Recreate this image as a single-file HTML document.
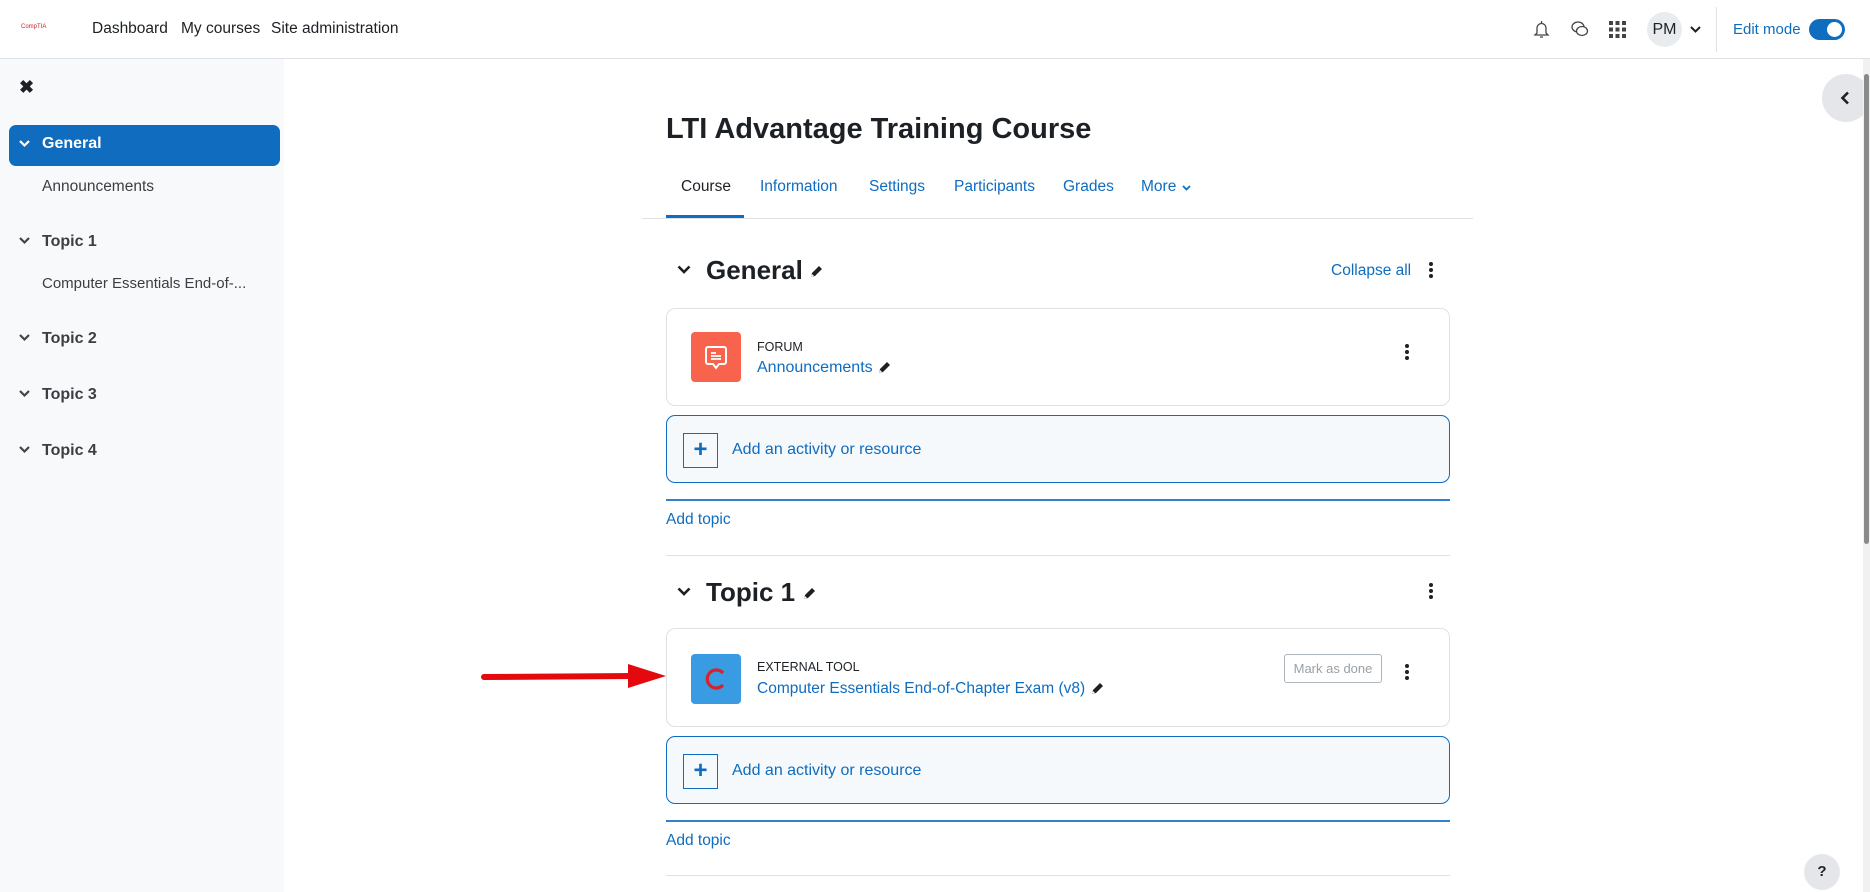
<!DOCTYPE html>
<html><head><meta charset="utf-8"><style>
*{box-sizing:border-box;margin:0;padding:0}
body{width:1870px;height:892px;overflow:hidden;background:#fff;font-family:"Liberation Sans",sans-serif;color:#1d2125;position:relative;font-size:17px}
.a{position:absolute;white-space:nowrap}
.lk{color:#0f6cbf}
.hdr{position:absolute;left:0;top:0;width:1870px;height:59px;background:#fff;border-bottom:1px solid #dee2e6}
.side{position:absolute;left:0;top:59px;width:284px;height:833px;background:#f8f9fa}
.card{position:absolute;left:666px;width:784px;border:1px solid #dee2e6;border-radius:9px;background:#fff}
.add{position:absolute;left:666px;width:784px;border:1px solid #0f6cbf;border-radius:9px;background:#f5f9fc}
.plus{position:absolute;left:16px;width:35px;height:35px;border:1px solid #0f6cbf;color:#0f6cbf;font-weight:bold;font-size:24px;text-align:center;line-height:31px}
.dots{position:absolute;width:4px}
.dots i{display:block;width:4px;height:4px;background:#1d2125;border-radius:50%;margin-bottom:2px}
.tv{font-weight:bold;font-size:16px}
.pen{display:inline-block;vertical-align:middle}
</style></head><body>
<div class="hdr">
 <div class="a" style="left:21px;top:24px;font-size:6px;color:#c8202f">CompTIA</div>
 <div class="a" style="left:92px;top:20px;font-size:15.5px">Dashboard</div>
 <div class="a" style="left:181px;top:20px;font-size:15.5px">My courses</div>
 <div class="a" style="left:271px;top:20px;font-size:15.5px">Site administration</div>
 <svg class="a" style="left:1533px;top:19px" width="17" height="20" viewBox="0 0 17 20"><path d="M8.5 2v2M4 14V9a4.5 4.5 0 0 1 9 0v5l2 2H2z M7 18h3" fill="none" stroke="#444" stroke-width="1.3"/></svg>
 <svg class="a" style="left:1570px;top:19px" width="20" height="20" viewBox="0 0 20 20"><ellipse cx="8" cy="8" rx="6" ry="5" fill="none" stroke="#444" stroke-width="1.3"/><ellipse cx="12" cy="12" rx="5.5" ry="4.5" fill="#fff" stroke="#444" stroke-width="1.3"/></svg>
 <svg class="a" style="left:1609px;top:21px" width="17" height="17" viewBox="0 0 17 17" fill="#444"><rect x="0" y="0" width="4" height="4"/><rect x="6.5" y="0" width="4" height="4"/><rect x="13" y="0" width="4" height="4"/><rect x="0" y="6.5" width="4" height="4"/><rect x="6.5" y="6.5" width="4" height="4"/><rect x="13" y="6.5" width="4" height="4"/><rect x="0" y="13" width="4" height="4"/><rect x="6.5" y="13" width="4" height="4"/><rect x="13" y="13" width="4" height="4"/></svg>
 <div class="a" style="left:1647px;top:12px;width:35px;height:35px;border-radius:50%;background:#e9ecef;text-align:center;line-height:35px;font-size:16px">PM</div>
 <svg class="a" style="left:1690px;top:26px" width="11" height="8" viewBox="0 0 11 8"><path d="M1 1l4.5 4.5L10 1" fill="none" stroke="#1d2125" stroke-width="2"/></svg>
 <div class="a" style="left:1716px;top:7px;width:1px;height:45px;background:#dee2e6"></div>
 <div class="a lk" style="left:1733px;top:21px;font-size:15px">Edit mode</div>
 <div class="a" style="left:1809px;top:19px;width:36px;height:21px;border-radius:11px;background:#0f6cbf"><div style="position:absolute;right:3px;top:3px;width:15px;height:15px;border-radius:50%;background:#fff"></div></div>
</div>
<div class="side">
 <div class="a" style="left:19px;top:18px;font-size:18px;font-weight:bold">✖</div>
 <div class="a" style="left:9px;top:66px;width:271px;height:41px;border-radius:7px;background:#0f6cbf"></div>
 <svg class="a" style="left:19px;top:81px" width="11" height="8" viewBox="0 0 11 8"><path d="M1 1l4.5 4.5L10 1" fill="none" stroke="#fff" stroke-width="2.2"/></svg>
 <div class="a tv" style="left:42px;top:76px;color:#fff">General</div>
 <div class="a" style="left:42px;top:119px;font-size:15.5px;color:#3a3f44">Announcements</div>
 <svg class="a" style="left:19px;top:178px" width="11" height="8" viewBox="0 0 11 8"><path d="M1 1l4.5 4.5L10 1" fill="none" stroke="#444" stroke-width="2.2"/></svg>
 <div class="a tv" style="left:42px;top:174px;color:#3a3f44">Topic 1</div>
 <div class="a" style="left:42px;top:216px;font-size:15px;color:#3a3f44">Computer Essentials End-of-...</div>
 <svg class="a" style="left:19px;top:275px" width="11" height="8" viewBox="0 0 11 8"><path d="M1 1l4.5 4.5L10 1" fill="none" stroke="#444" stroke-width="2.2"/></svg>
 <div class="a tv" style="left:42px;top:271px;color:#3a3f44">Topic 2</div>
 <svg class="a" style="left:19px;top:331px" width="11" height="8" viewBox="0 0 11 8"><path d="M1 1l4.5 4.5L10 1" fill="none" stroke="#444" stroke-width="2.2"/></svg>
 <div class="a tv" style="left:42px;top:327px;color:#3a3f44">Topic 3</div>
 <svg class="a" style="left:19px;top:387px" width="11" height="8" viewBox="0 0 11 8"><path d="M1 1l4.5 4.5L10 1" fill="none" stroke="#444" stroke-width="2.2"/></svg>
 <div class="a tv" style="left:42px;top:383px;color:#3a3f44">Topic 4</div>
</div>

<div class="a" style="left:666px;top:113px;font-size:29px;font-weight:bold">LTI Advantage Training Course</div>
<div class="a" style="left:681px;top:178px;font-size:15.5px">Course</div>
<div class="a lk" style="left:760px;top:178px;font-size:15.5px">Information</div>
<div class="a lk" style="left:869px;top:178px;font-size:15.5px">Settings</div>
<div class="a lk" style="left:954px;top:178px;font-size:15.5px">Participants</div>
<div class="a lk" style="left:1063px;top:178px;font-size:15.5px">Grades</div>
<div class="a lk" style="left:1141px;top:178px;font-size:15.5px">More</div>
<svg class="a" style="left:1182px;top:185px" width="9" height="6" viewBox="0 0 9 6"><path d="M1 1l3.5 3.5L8 1" fill="none" stroke="#0f6cbf" stroke-width="1.8"/></svg>
<div class="a" style="left:642px;top:218px;width:831px;height:1px;background:#dee2e6"></div>
<div class="a" style="left:666px;top:215px;width:78px;height:3px;background:#0f6cbf"></div>

<svg class="a" style="left:677px;top:265px" width="14" height="10" viewBox="0 0 14 10"><path d="M1.5 1.5l5.5 5.5 5.5-5.5" fill="none" stroke="#1d2125" stroke-width="2.6"/></svg>
<div class="a" style="left:706px;top:255px;font-size:26px;font-weight:bold">General</div>
<svg class="a" style="left:809px;top:265px" width="14" height="14" viewBox="0 0 14 14"><path d="M2 12l1-4 7-7 3 3-7 7z" fill="#1d2125"/><path d="M2 12l1-3 2 2z" fill="#fff"/></svg>
<div class="a lk" style="left:1331px;top:262px;font-size:15.5px">Collapse all</div>
<div class="dots" style="left:1429px;top:262px"><i></i><i></i><i></i></div>

<div class="card" style="top:308px;height:98px">
 <div class="a" style="left:24px;top:23px;width:50px;height:50px;border-radius:4px;background:#f7634d"></div>
 <svg class="a" style="left:38px;top:36px" width="22" height="26" viewBox="0 0 22 26"><path d="M3 2h16a2 2 0 0 1 2 2v13a2 2 0 0 1-2 2h-5l-3 4-3-4H3a2 2 0 0 1-2-2V4a2 2 0 0 1 2-2z" fill="none" stroke="#fff" stroke-width="2"/><path d="M6 8h5M6 11h10M6 14h10" stroke="#fff" stroke-width="1.8"/></svg>
 <div class="a" style="left:90px;top:31px;font-size:12.5px">FORUM</div>
 <div class="a lk" style="left:90px;top:50px;font-size:16px">Announcements <svg class="pen" width="14" height="14" viewBox="0 0 14 14"><path d="M2 12l1-4 7-7 3 3-7 7z" fill="#1d2125"/><path d="M2 12l1-3 2 2z" fill="#fff"/></svg></div>
 <div class="dots" style="left:738px;top:35px"><i></i><i></i><i></i></div>
</div>
<div class="add" style="top:415px;height:68px">
 <div class="plus" style="top:17px">+</div>
 <div class="a lk" style="left:65px;top:25px;font-size:16px">Add an activity or resource</div>
</div>
<div class="a" style="left:666px;top:499px;width:784px;height:2px;background:#0f6cbf;opacity:.85"></div>
<div class="a lk" style="left:666px;top:511px;font-size:15.5px">Add topic</div>
<div class="a" style="left:666px;top:555px;width:784px;height:1px;background:#dee2e6"></div>

<svg class="a" style="left:677px;top:587px" width="14" height="10" viewBox="0 0 14 10"><path d="M1.5 1.5l5.5 5.5 5.5-5.5" fill="none" stroke="#1d2125" stroke-width="2.6"/></svg>
<div class="a" style="left:706px;top:577px;font-size:26px;font-weight:bold">Topic 1</div>
<svg class="a" style="left:802px;top:587px" width="14" height="14" viewBox="0 0 14 14"><path d="M2 12l1-4 7-7 3 3-7 7z" fill="#1d2125"/><path d="M2 12l1-3 2 2z" fill="#fff"/></svg>
<div class="dots" style="left:1429px;top:583px"><i></i><i></i><i></i></div>

<div class="card" style="top:628px;height:99px">
 <div class="a" style="left:24px;top:25px;width:50px;height:50px;border-radius:4px;background:#399be2"></div>
 <svg class="a" style="left:36px;top:37px" width="26" height="26" viewBox="0 0 26 26"><path d="M20 7A9 9 0 1 0 20 19" fill="none" stroke="#d9202b" stroke-width="3.2"/></svg>
 <div class="a" style="left:90px;top:31px;font-size:12.5px">EXTERNAL TOOL</div>
 <div class="a lk" style="left:90px;top:51px;font-size:15.5px">Computer Essentials End-of-Chapter Exam (v8) <svg class="pen" width="14" height="14" viewBox="0 0 14 14"><path d="M2 12l1-4 7-7 3 3-7 7z" fill="#1d2125"/><path d="M2 12l1-3 2 2z" fill="#fff"/></svg></div>
 <div class="a" style="left:617px;top:25px;width:98px;height:29px;border:1px solid #adb5bd;border-radius:3px;color:#9aa0a6;font-size:13px;text-align:center;line-height:27px">Mark as done</div>
 <div class="dots" style="left:738px;top:35px"><i></i><i></i><i></i></div>
</div>
<div class="add" style="top:736px;height:68px">
 <div class="plus" style="top:17px">+</div>
 <div class="a lk" style="left:65px;top:25px;font-size:16px">Add an activity or resource</div>
</div>
<div class="a" style="left:666px;top:820px;width:784px;height:2px;background:#0f6cbf;opacity:.85"></div>
<div class="a lk" style="left:666px;top:832px;font-size:15.5px">Add topic</div>
<div class="a" style="left:666px;top:875px;width:784px;height:1px;background:#dee2e6"></div>

<svg class="a" style="left:480px;top:660px" width="192" height="32" viewBox="0 0 192 32"><path d="M4 17L160 16" stroke="#e3090e" stroke-width="6" stroke-linecap="round"/><path d="M148 4L186 16L148 28z" fill="#e3090e"/></svg>

<div class="a" style="left:1822px;top:74px;width:48px;height:48px;border-radius:50%;background:#e4e6e9"></div>
<svg class="a" style="left:1840px;top:91px" width="10" height="14" viewBox="0 0 10 14"><path d="M8 1.5L2.5 7 8 12.5" fill="none" stroke="#1d2125" stroke-width="2.6"/></svg>
<div class="a" style="left:1863px;top:59px;width:7px;height:833px;background:#f1f1f1"></div>
<div class="a" style="left:1864px;top:74px;width:5px;height:470px;background:#8a8a8a;border-radius:3px"></div>
<div class="a" style="left:1804px;top:854px;width:36px;height:36px;border-radius:50%;background:#e4e6e9;text-align:center;line-height:36px;font-weight:bold;font-size:15px">?</div>
</body></html>
